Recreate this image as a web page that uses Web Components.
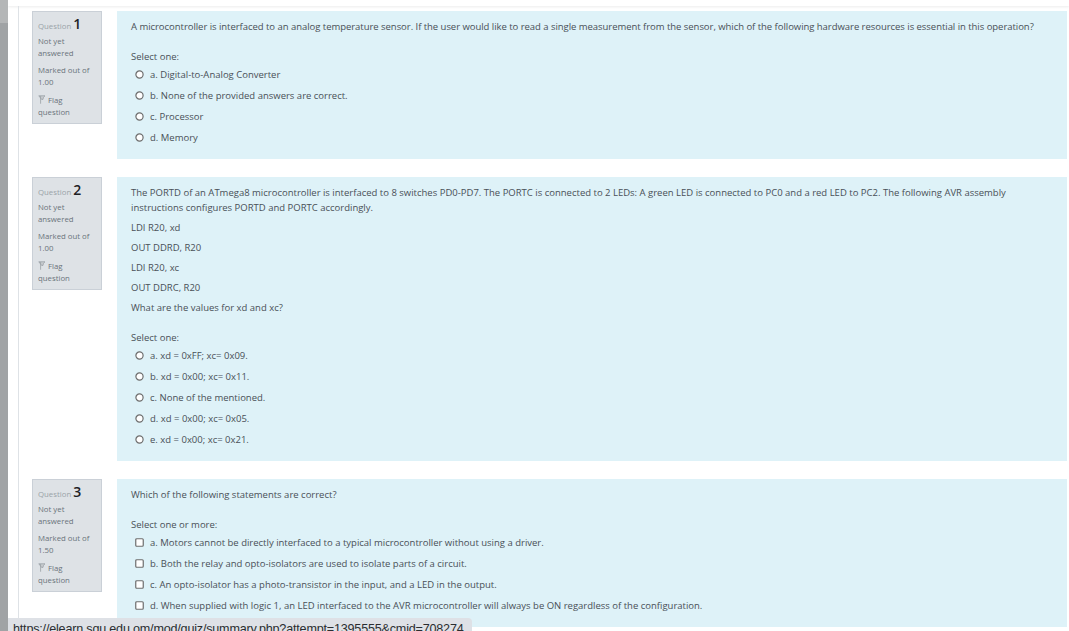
<!DOCTYPE html>
<html>
<head>
<meta charset="utf-8">
<style>
  html, body { margin: 0; height: 100%; overflow: hidden; background: #fff; }
  body { font-family: "Open Sans", "Liberation Sans", sans-serif; color: #495057; }
</style>
</head>
<body>
<quiz-page>
  <quiz-question num="1" mark="1.00">
    <p style="margin:0 0 15px;letter-spacing:-0.038px">A microcontroller is interfaced to an analog temperature sensor. If the user would like to read a single measurement from the sensor, which of the following hardware resources is essential in this operation?</p>
    <span slot="prompt">Select one:</span>
    <quiz-option slot="options" label="a. Digital-to-Analog Converter"></quiz-option>
    <quiz-option slot="options" label="b. None of the provided answers are correct."></quiz-option>
    <quiz-option slot="options" label="c. Processor"></quiz-option>
    <quiz-option slot="options" label="d. Memory"></quiz-option>
  </quiz-question>
  <quiz-question num="2" mark="1.00">
    <p style="margin:0 0 5px">The PORTD of an ATmega8 microcontroller is interfaced to 8 switches PD0-PD7. The PORTC is connected to 2 LEDs: A green LED is connected to PC0 and a red LED to PC2. The following AVR assembly instructions configures PORTD and PORTC accordingly.</p>
    <p style="margin:0 0 5px">LDI R20, xd</p>
    <p style="margin:0 0 5px">OUT DDRD, R20</p>
    <p style="margin:0 0 5px">LDI R20, xc</p>
    <p style="margin:0 0 5px">OUT DDRC, R20</p>
    <p style="margin:0 0 15px">What are the values for xd and xc?</p>
    <span slot="prompt">Select one:</span>
    <quiz-option slot="options" label="a. xd = 0xFF; xc= 0x09."></quiz-option>
    <quiz-option slot="options" label="b. xd = 0x00; xc= 0x11."></quiz-option>
    <quiz-option slot="options" label="c. None of the mentioned."></quiz-option>
    <quiz-option slot="options" label="d. xd = 0x00; xc= 0x05."></quiz-option>
    <quiz-option slot="options" label="e. xd = 0x00; xc= 0x21."></quiz-option>
  </quiz-question>
  <quiz-question num="3" mark="1.50">
    <p style="margin:0 0 15px">Which of the following statements are correct?</p>
    <span slot="prompt">Select one or more:</span>
    <quiz-option slot="options" type="checkbox" label="a. Motors cannot be directly interfaced to a typical microcontroller without using a driver."></quiz-option>
    <quiz-option slot="options" type="checkbox" label="b. Both the relay and opto-isolators are used to isolate parts of a circuit."></quiz-option>
    <quiz-option slot="options" type="checkbox" label="c. An opto-isolator has a photo-transistor in the input, and a LED in the output."></quiz-option>
    <quiz-option slot="options" type="checkbox" label="d. When supplied with logic 1, an LED interfaced to the AVR microcontroller will always be ON regardless of the configuration."></quiz-option>
  </quiz-question>
</quiz-page>
<status-bubble>https://elearn.squ.edu.om/mod/quiz/summary.php?attempt=1395555&amp;cmid=708274</status-bubble>

<script>
class QuizPage extends HTMLElement {
  constructor() {
    super();
    this.attachShadow({ mode: 'open' }).innerHTML = `
    <style>
    :host {
      display: block;
      height: 631px;
      overflow: hidden;
      box-sizing: border-box;
      border-left: 8px solid #a0a3a5;
      border-image: linear-gradient(#b4b6b7 24px, #a0a3a5 24px) 1;
    }
    .top {
      height: 6px;
      box-shadow: 0 1px 3px rgba(0, 0, 0, 0.08);
    }
    .frame {
      margin-left: 10px;
      border-left: 1px solid #dee2e6;
      padding: 5px 2px 0 13px;
      height: 100%;
    }
    </style>
    <div class="top"></div>
    <div class="frame"><slot></slot></div>
    `;
  }
}

class QuizQuestion extends HTMLElement {
  constructor() {
    super();
    const num = this.getAttribute('num');
    const mark = this.getAttribute('mark');
    this.attachShadow({ mode: 'open' }).innerHTML = `
    <style>
    :host {
      display: flex;
      align-items: flex-start;
      gap: 15px;
      margin-bottom: 18px;
    }
    .info {
      flex: none;
      box-sizing: border-box;
      width: 70px;
      height: 113px;
      padding: 5px 5px 0;
      background: #dee2e6;
      border: 1px solid #cad0d7;
      font-size: 7.8px;
      line-height: 12px;
      color: #6a737b;
    }
    .title { height: 13px; line-height: 13px; color: #9aa2a8; white-space: nowrap; margin-bottom: 5px; }
    .title b { font-size: 14px; font-weight: 600; color: #1d2125; }
    .info div { margin-bottom: 5px; }
    .flag { margin-top: 6px; }
    .flag svg { vertical-align: -1px; }
    .content {
      flex: 1;
      min-width: 0;
      box-sizing: border-box;
      background: #def2f8;
      padding: 8px 14px 11px;
      font-size: 9.5px;
      line-height: 15px;
      color: #495057;
    }
    .prompt { display: block; }
    </style>
    <div class="info">
      <div class="title">Question <b>${num}</b></div>
      <div>Not yet answered</div>
      <div>Marked out of ${mark}</div>
      <div class="flag"><svg width="8" height="9" viewBox="0 0 8 9"><path d="M0.8 0.8H7L5.4 2.4 5 4.4H3.6L0.8 0.8ZM2.6 1V8.7" fill="#c9cdd1" stroke="#99a0a5" stroke-width="0.8"/></svg> Flag question</div>
    </div>
    <div class="content">
      <slot></slot>
      <span class="prompt"><slot name="prompt"></slot></span>
      <slot name="options"></slot>
    </div>
    `;
  }
}

class QuizOption extends HTMLElement {
  constructor() {
    super();
    const box = this.getAttribute('type') === 'checkbox'
      ? '<svg width="9" height="9" viewBox="0 0 9 9"><rect x="0.75" y="0.75" width="7.5" height="7.5" rx="1" fill="#fff" stroke="#6d6d6d" stroke-width="1.2"/></svg>'
      : '<svg width="9" height="9" viewBox="0 0 9 9"><circle cx="4.5" cy="4.5" r="3.6" fill="#fff" stroke="#6d6d6d" stroke-width="1.2"/></svg>';
    this.attachShadow({ mode: 'open' }).innerHTML = `
    <style>
    :host {
      display: flex;
      align-items: center;
      gap: 6px;
      height: 21px;
      padding-left: 4px;
      white-space: nowrap;
    }
    svg { flex: none; }
    </style>
    ${box}<span>${this.getAttribute('label')}</span>
    `;
  }
}

class StatusBubble extends HTMLElement {
  constructor() {
    super();
    this.attachShadow({ mode: 'open' }).innerHTML = `
    <style>
    :host {
      position: fixed;
      left: 8px;
      top: 618px;
      width: 464px;
      height: 20px;
      box-sizing: border-box;
      padding: 2px 0 0 5px;
      background: #dee1e6;
      border-radius: 0 4px 0 0;
      font: 12.6px/18px "Liberation Sans", sans-serif;
      letter-spacing: -0.2px;
      color: #2b2e31;
      white-space: nowrap;
    }
    </style>
    <slot></slot>
    `;
  }
}

customElements.define('quiz-page', QuizPage);
customElements.define('quiz-question', QuizQuestion);
customElements.define('quiz-option', QuizOption);
customElements.define('status-bubble', StatusBubble);
</script>
</body>
</html>
